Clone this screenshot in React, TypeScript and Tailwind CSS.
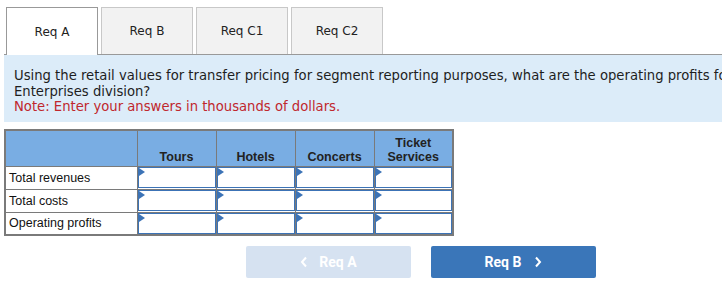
import React from "react";

const tabs = ["Req A", "Req B", "Req C1", "Req C2"];
const cols = ["Tours", "Hotels", "Concerts", "Ticket Services"];
const rows = ["Total revenues", "Total costs", "Operating profits"];

function InputCell() {
  return (
    <td className="border border-[#7a7a7a] p-0 h-[23px]">
      <div className="relative h-[21px] border-[1.5px] border-[#3c73b6] bg-white">
        <div className="absolute left-0 top-0 w-0 h-0 border-t-[4px] border-b-[4px] border-l-[6px] border-t-transparent border-b-transparent border-l-[#3c73b6]" />
      </div>
    </td>
  );
}

export default function App() {
  return (
    <div className="w-[722px] h-[290px] bg-white overflow-hidden" style={{ fontFamily: "'DejaVu Sans', Verdana, sans-serif" }}>
      <div className="pt-[7px] pl-[4px]">
        <div className="flex border-b border-[#999] pl-[2px] gap-[3px]">
          {tabs.map((t, i) => (
            <div
              key={t}
              className={
                "w-[92px] h-[47px] flex items-center justify-center text-[12px] text-[#222] border border-b-0 " +
                (i === 0 ? "bg-white border-[#999] -mb-px h-[48px]" : "bg-[#f2f2f2] border-[#c8c8c8]")
              }
            >
              {t}
            </div>
          ))}
        </div>
        <div className="bg-[#dcecf9] h-[67px] pl-[10px] pt-[13px] text-[13.2px] leading-[15.5px] text-[#1e1e1e] whitespace-nowrap overflow-hidden">
          <div>Using the retail values for transfer pricing for segment reporting purposes, what are the operating profits for the</div>
          <div>Enterprises division?</div>
          <div className="text-[#c0272d]">Note: Enter your answers in thousands of dollars.</div>
        </div>
        <table className="mt-[7px] border-collapse border-2 border-[#7a7a7a]" style={{ fontFamily: "'Liberation Sans', Arial, sans-serif" }}>
          <thead>
            <tr className="bg-[#79ade3] h-[36px]">
              <th className="border border-[#7a7a7a] w-[132px]" />
              {cols.map((c) => (
                <th key={c} className="border border-[#7a7a7a] w-[79px] align-bottom pb-[2px] text-[12.5px] leading-[14px] font-bold text-[#222]">
                  {c === "Ticket Services" ? (
                    <>
                      Ticket
                      <br />
                      Services
                    </>
                  ) : (
                    c
                  )}
                </th>
              ))}
            </tr>
          </thead>
          <tbody>
            {rows.map((r) => (
              <tr key={r}>
                <td className="border border-[#7a7a7a] pl-[3px] text-[12.5px] text-[#111] h-[23px] leading-[14px] align-middle">{r}</td>
                <InputCell />
                <InputCell />
                <InputCell />
                <InputCell />
              </tr>
            ))}
          </tbody>
        </table>
        <div className="flex mt-[10px] ml-[242px] gap-[20px]" style={{ fontFamily: "Roboto, sans-serif" }}>
          <div className="w-[165px] h-[32px] rounded-[2px] bg-[#d6e2f1] text-white font-bold text-[14px] flex items-center justify-center gap-[11px]">
            <svg width="8" height="12" viewBox="0 0 8 12"><path d="M6 1.5 L2 6 L6 10.5" fill="none" stroke="white" strokeWidth="2" /></svg>
            <span>Req A</span>
          </div>
          <div className="w-[165px] h-[32px] rounded-[2px] bg-[#3a76b9] text-white font-bold text-[14px] flex items-center justify-center gap-[13px]">
            <span>Req B</span>
            <svg width="8" height="12" viewBox="0 0 8 12"><path d="M2 1.5 L6 6 L2 10.5" fill="none" stroke="white" strokeWidth="2" /></svg>
          </div>
        </div>
      </div>
    </div>
  );
}
